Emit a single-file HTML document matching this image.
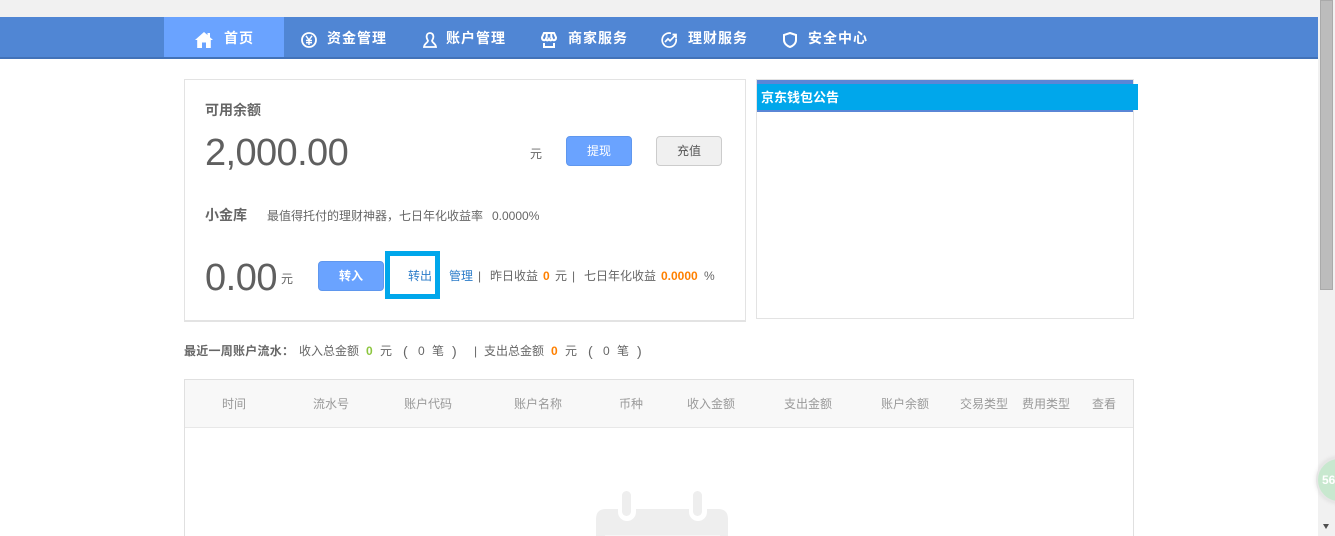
<!DOCTYPE html>
<html lang="zh-CN"><head><meta charset="utf-8"><title>首页</title>
<style>
html,body{margin:0;padding:0;background:#fff;overflow:hidden}
body{width:1335px;height:536px;position:relative;font-family:"Liberation Sans","Noto Sans CJK SC",sans-serif;font-size:12px;color:#666}
.a{position:absolute;white-space:nowrap;line-height:16px}
.n{position:absolute;top:30px;color:#fff;font-weight:bold;font-size:14px;line-height:16px;white-space:nowrap;letter-spacing:1px}
.i{position:absolute;fill:none;stroke:#fff;stroke-width:1.8}
.th{position:absolute;top:396px;color:#999;font-size:12px;line-height:16px;white-space:nowrap}
.b{position:absolute;box-sizing:border-box;border-radius:4px;text-align:center;font-size:12px}
b.o{color:#ff8000}b.g{color:#8cc63f}
</style></head><body>
<div style="position:absolute;left:0;top:0;width:1318px;height:17px;background:#f1f1f1"></div>
<div style="position:absolute;left:0;top:17px;width:1318px;height:40px;background:#5086d4"></div>
<div style="position:absolute;left:0;top:57px;width:1318px;height:2px;background:#4272b8"></div>
<div style="position:absolute;left:164px;top:17px;width:120px;height:40px;background:#6aa3ff"></div>

<svg class="i" style="left:195px;top:32px;stroke:none;fill:#fff" width="18" height="16" viewBox="0 0 18 16"><path d="M9 0L12.500 3V1H15V5.200L18 8H15.800V16H11V10.500H7V16H2.200V8H0Z"/></svg>
<span class="n" style="left:224px">首页</span>
<svg class="i" style="left:301px;top:32px" width="16" height="16" viewBox="0 0 16 16"><circle cx="8" cy="8" r="7"/><path d="M5 3.800L8 8L11 3.800M5 8.500H11M5 10.700H11M8 8V13" stroke-width="1.400"/></svg>
<span class="n" style="left:327px">资金管理</span>
<svg class="i" style="left:423px;top:32px" width="14" height="16" viewBox="0 0 14 16"><path d="M7 1C4.800 1 3.600 2.700 3.600 4.800C3.600 6.600 4.600 7.900 5 8.800C5 10.800 1.500 11 1 15H13C12.500 11 9 10.800 9 8.800C9.400 7.900 10.400 6.600 10.400 4.800C10.400 2.700 9.200 1 7 1Z"/></svg>
<span class="n" style="left:446px">账户管理</span>
<svg class="i" style="left:541px;top:32px" width="16" height="16" viewBox="0 0 16 16"><path d="M3 1H13L15 5.500C15 8.800 12 8.800 11.200 7C10.500 8.800 8.800 8.800 8 7C7.200 8.800 5.500 8.800 4.800 7C4 8.800 1 8.800 1 5.500ZM5.700 1.500V6.500M10.300 1.500V6.500M3 11V15H13V11" stroke-width="2"/></svg>
<span class="n" style="left:568px">商家服务</span>
<svg class="i" style="left:661px;top:32px" width="16" height="16" viewBox="0 0 16 16"><path d="M15 6.500A7 7 0 1 1 10 1.300M4 10L7 6.800L9 8.800L14.800 2.800M11.500 2.500H15V6" stroke-width="1.700"/></svg>
<span class="n" style="left:688px">理财服务</span>
<svg class="i" style="left:783px;top:32px" width="14" height="16" viewBox="0 0 14 16"><path d="M7 1L13 3V8C13 11.500 10 14 7 15C4 14 1 11.500 1 8V3Z" stroke-width="2"/></svg>
<span class="n" style="left:808px">安全中心</span>

<div style="position:absolute;left:184px;top:79px;width:562px;height:243px;box-sizing:border-box;border:1px solid #e3e3e3;border-bottom:2px solid #e3e3e3"></div>
<span class="a" style="left:205px;top:102px;font-weight:bold;font-size:14px;color:#666">可用余额</span>
<span class="a" style="left:205px;top:131px;font-size:38px;line-height:44px;color:#5f5f5f;letter-spacing:-.6px">2,000.00</span>
<span class="a" style="left:530px;top:146px">元</span>
<div class="b" style="left:566px;top:136px;width:66px;height:30px;background:#6aa3ff;border:1px solid #5f97ee;color:#fff;line-height:28px">提现</div>
<div class="b" style="left:656px;top:136px;width:66px;height:30px;background:#f0f0f0;border:1px solid #ccc;color:#555;line-height:28px">充值</div>
<span class="a" style="left:205px;top:207px;font-weight:bold;font-size:14px;color:#666">小金库</span>
<span class="a" style="left:267px;top:208px">最值得托付的理财神器，七日年化收益率</span>
<span class="a" style="left:492px;top:208px">0.0000%</span>
<span class="a" style="left:205px;top:256px;font-size:38px;line-height:44px;color:#5f5f5f;letter-spacing:-.5px">0.00</span>
<span class="a" style="left:281px;top:271px">元</span>
<div class="b" style="left:318px;top:261px;width:66px;height:30px;background:#6aa3ff;border:1px solid #5f97ee;color:#fff;line-height:28px;font-weight:bold">转入</div>
<div style="position:absolute;left:385px;top:251px;width:55px;height:48px;box-sizing:border-box;border:5px solid #00a7eb"></div>
<span class="a" style="left:408px;top:268px;color:#2b7cc9">转出</span>
<span class="a" style="left:449px;top:268px;color:#2b7cc9">管理</span>
<span class="a" style="left:478px;top:268px">|</span>
<span class="a" style="left:490px;top:268px">昨日收益</span>
<b class="a o" style="left:543px;top:268px">0</b>
<span class="a" style="left:555px;top:268px">元</span>
<span class="a" style="left:572px;top:268px">|</span>
<span class="a" style="left:584px;top:268px">七日年化收益</span>
<b class="a o" style="left:661px;top:268px">0.0000</b>
<span class="a" style="left:704px;top:268px">%</span>

<div style="position:absolute;left:756px;top:79px;width:378px;height:240px;box-sizing:border-box;border:1px solid #e3e3e3"></div>
<div style="position:absolute;left:757px;top:80px;width:376px;height:32px;background:#5a86d6"></div>
<div style="position:absolute;left:757px;top:84px;width:381px;height:26px;background:#00a7eb"></div>
<span class="a" style="left:761px;top:90px;color:#fff;font-weight:bold;font-size:13px">京东钱包公告</span>

<span class="a" style="left:184px;top:343px;font-weight:bold;color:#666;letter-spacing:.25px">最近一周账户流水：</span>
<span class="a" style="left:299px;top:343px">收入总金额</span>
<b class="a g" style="left:366px;top:343px">0</b>
<span class="a" style="left:380px;top:343px">元</span>
<span class="a" style="left:403px;top:343px;font-size:14px">(</span>
<span class="a" style="left:418px;top:343px">0</span>
<span class="a" style="left:432px;top:343px">笔</span>
<span class="a" style="left:452px;top:343px;font-size:14px">)</span>
<span class="a" style="left:474px;top:343px">|</span>
<span class="a" style="left:484px;top:343px">支出总金额</span>
<b class="a o" style="left:551px;top:343px">0</b>
<span class="a" style="left:565px;top:343px">元</span>
<span class="a" style="left:588px;top:343px;font-size:14px">(</span>
<span class="a" style="left:603px;top:343px">0</span>
<span class="a" style="left:617px;top:343px">笔</span>
<span class="a" style="left:637px;top:343px;font-size:14px">)</span>

<div style="position:absolute;left:184px;top:379px;width:950px;height:170px;box-sizing:border-box;border:1px solid #e0e0e0"></div>
<div style="position:absolute;left:185px;top:380px;width:948px;height:47px;background:#f8f8f8;border-bottom:1px solid #e8e8e8"></div>
<span class="th" style="left:222px">时间</span>
<span class="th" style="left:313px">流水号</span>
<span class="th" style="left:404px">账户代码</span>
<span class="th" style="left:514px">账户名称</span>
<span class="th" style="left:619px">币种</span>
<span class="th" style="left:687px">收入金额</span>
<span class="th" style="left:784px">支出金额</span>
<span class="th" style="left:881px">账户余额</span>
<span class="th" style="left:960px">交易类型</span>
<span class="th" style="left:1022px">费用类型</span>
<span class="th" style="left:1092px">查看</span>

<svg style="position:absolute;left:596px;top:490px" width="132" height="46" viewBox="0 0 132 46"><path d="M10 19H122Q132 19 132 29V46H0V29Q0 19 10 19Z" fill="#eee"/><rect x="9" y="45.500" width="115" height="1" fill="#fff"/><rect x="22" y="-2" width="18" height="33" rx="9" fill="#fff"/><rect x="93" y="-2" width="18" height="33" rx="9" fill="#fff"/><rect x="26" y="1" width="9" height="25" rx="4.500" fill="#eee"/><rect x="97" y="1" width="9" height="25" rx="4.500" fill="#eee"/></svg>

<div style="position:absolute;left:1318px;top:0;width:17px;height:536px;background:#f1f1f1"></div>
<div style="position:absolute;left:1320px;top:0;width:13px;height:290px;box-sizing:border-box;background:#bcbcbc;border:1px solid #aaa"></div>
<div style="position:absolute;left:1306px;top:450px;width:29px;height:62px;overflow:hidden">
<div style="position:absolute;left:10px;top:7px;width:46px;height:46px;border-radius:50%;background:#c8e8cf;border:2px solid #e6e6e6;box-shadow:0 0 5px rgba(0,0,0,.1);box-sizing:border-box;color:#fff;font-weight:bold;font-size:12px;line-height:42px;padding-left:4px;white-space:nowrap">56</div>
</div>
<div style="position:absolute;left:1323px;top:524px;width:0;height:0;border-left:3.500px solid transparent;border-right:3.500px solid transparent;border-top:5px solid #505050"></div>
</body></html>
